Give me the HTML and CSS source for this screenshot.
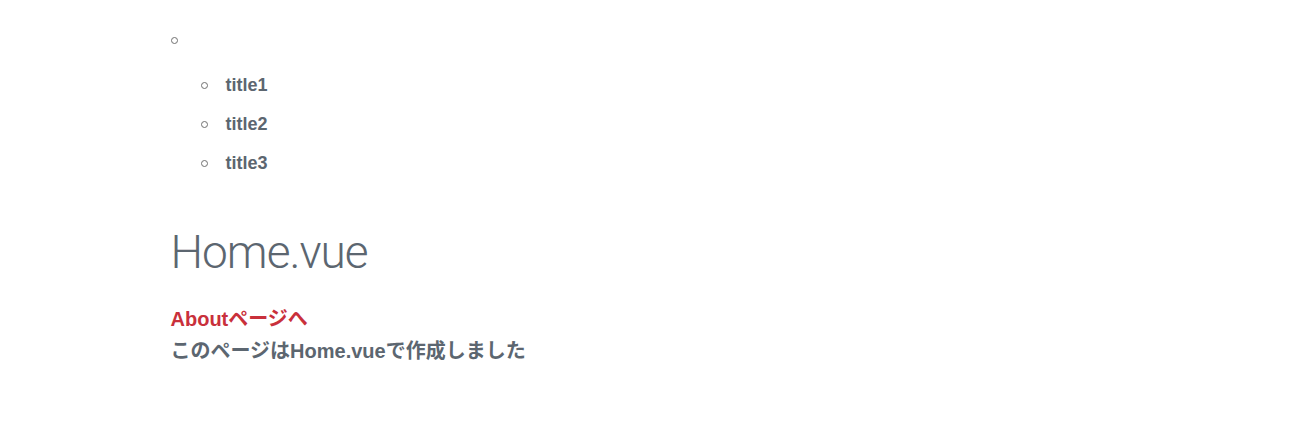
FILE: index.html
```html
<!DOCTYPE html>
<html lang="ja">
<head>
<meta charset="utf-8">
<title>Home</title>
<link rel="stylesheet" href="styles.css">
</head>
<body>
<div class="container">
  <ul class="outer">
    <li class="outer-item">
      <div class="outer-row bullet"></div>
      <ul class="inner">
        <li class="inner-item bullet">title1</li>
        <li class="inner-item bullet">title2</li>
        <li class="inner-item bullet">title3</li>
      </ul>
    </li>
  </ul>
  <h1 class="title">Home.vue</h1>
  <a class="link" href="#">Aboutページへ</a>
  <p class="desc">このページはHome.vueで作成しました</p>
</div>
</body>
</html>
```
FILE: styles.css
```css
html, body {
  margin: 0;
  padding: 0;
  background: #ffffff;
}
body {
  font-family: "Liberation Sans", "Noto Sans CJK JP", sans-serif;
  color: #5c6670;
}
.container {
  width: 960px;
  margin: 0 auto;
  padding-top: 28px;
}
.outer, .inner {
  list-style: none;
  margin: 0;
  padding: 0;
}
.bullet {
  display: flex;
  align-items: center;
  gap: 18px;
}
.bullet::before {
  content: "";
  flex: none;
  width: 5px;
  height: 5px;
  border: 1px solid #707070;
  border-radius: 50%;
}
.outer-row {
  height: 24px;
}
.inner {
  margin-top: 21px;
  padding-left: 30px;
}
.inner-item {
  font-weight: bold;
  font-size: 18px;
  line-height: 24px;
  margin-bottom: 15px;
}
.title {
  font-family: "Roboto", "Liberation Sans", sans-serif;
  font-weight: 300;
  font-size: 46px;
  line-height: 56px;
  margin: 49px 0 23px 0;
  color: #5c6670;
  letter-spacing: -1px;
}
.link {
  display: block;
  color: #c9303b;
  font-weight: bold;
  font-size: 20px;
  line-height: 32px;
  text-decoration: none;
}
.desc {
  margin: 0;
  font-weight: bold;
  font-size: 20px;
  line-height: 32px;
}
```
